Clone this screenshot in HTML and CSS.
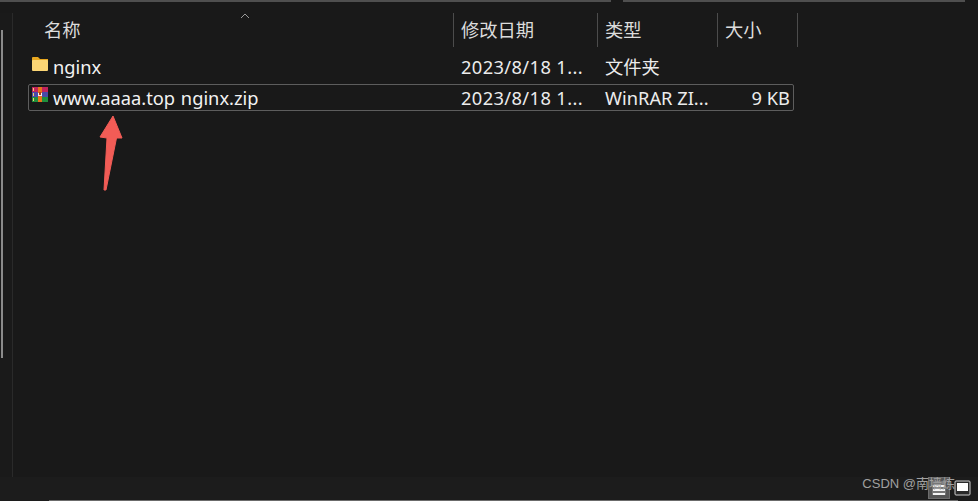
FILE: index.html
```html
<!DOCTYPE html>
<html lang="zh-CN">
<head>
<meta charset="utf-8">
<title>nginx</title>
<link rel="stylesheet" href="styles.css">
</head>
<body>
<div class="window">
  <div class="toolbar-edge">
    <div class="edge-line edge-left"></div>
    <div class="edge-line edge-right"></div>
  </div>
  <div class="main">
    <aside class="rail"><div class="rail-thumb"></div></aside>
    <section class="list">
      <div class="sort-caret">
        <svg width="10" height="6" viewBox="0 0 10 6"><path d="M1 5 5 1l4 4" fill="none" stroke="#9a9a9a" stroke-width="1"/></svg>
      </div>
      <div class="header">
        <div class="col col-name head-cell head-name">名称</div>
        <div class="col col-date head-cell">修改日期</div>
        <div class="col col-type head-cell">类型</div>
        <div class="col col-size head-cell">大小</div>
      </div>
      <div class="row row-first">
        <div class="col col-name name-cell">
          <svg class="file-icon" width="16" height="15" viewBox="0 0 16 15">
            <path d="M0 3V1q0-1 1-1h5l2 2h8v2H0z" fill="#e8a820"/>
            <rect x="0" y="3" width="16" height="11" rx="1" fill="#fcd675"/>
          </svg>
          <span>nginx</span>
        </div>
        <div class="col col-date date-cell">2023/8/18 1...</div>
        <div class="col col-type">文件夹</div>
        <div class="col col-size"></div>
      </div>
      <div class="row row-selected">
        <div class="col col-name name-cell">
          <svg class="file-icon" width="16" height="16" viewBox="0 0 16 16">
            <rect x="0" y="0" width="16" height="5" fill="#c2245c"/>
            <rect x="0" y="5" width="16" height="5" fill="#4a4aa8"/>
            <rect x="0" y="10" width="16" height="5" fill="#1f8f3c"/>
            <rect x="6" y="0" width="4" height="15" fill="#e8731c"/>
            <rect x="6" y="6" width="4" height="3" fill="#f5f0e6"/>
            <rect x="7" y="5" width="2" height="3" fill="#b03a20"/>
            <rect x="1" y="1" width="1" height="3" fill="#f4d06a"/>
            <rect x="1" y="6" width="1" height="3" fill="#f4d06a"/>
            <rect x="1" y="11" width="1" height="3" fill="#f4d06a"/>
          </svg>
          <span class="zip-name">www.aaaa.top nginx.zip</span>
        </div>
        <div class="col col-date date-cell">2023/8/18 1...</div>
        <div class="col col-type">WinRAR ZI...</div>
        <div class="col col-size size-value">9 KB</div>
      </div>
      <svg class="arrow" width="24" height="78" viewBox="0 0 24 78">
        <path d="M14 1 23 23 17.500 23 7 75 5 75 8 23 1 22Z" fill="#f25c56" stroke="#f25c56" stroke-linejoin="round"/>
      </svg>
    </section>
  </div>
  <footer class="status">
    <div class="view-btn view-active">
      <svg width="16" height="16" viewBox="0 0 16 16"><rect x="1" y="1" width="14" height="14" fill="#dadada" opacity=".25"/><path d="M2 6h12M2 10h12M2 14h12" stroke="#f4f4f4" stroke-width="2"/></svg>
    </div>
    <div class="view-btn view-plain">
      <svg width="17" height="16" viewBox="0 0 17 16"><rect x="1" y="1" width="15" height="14" rx="1" fill="#2a2a2a" stroke="#cfcfcf"/><rect x="3" y="3" width="11" height="8" fill="#fff"/></svg>
    </div>
    <span class="watermark">CSDN @南墙炼</span>
    <div class="scroll-line"></div>
  </footer>
</div>
</body>
</html>
```
FILE: styles.css
```css
* { box-sizing: border-box; }
html, body { margin: 0; padding: 0; background: #191919; }
body { font-family: "Noto Sans", "Noto Sans CJK SC", sans-serif; color: #ececec; overflow: hidden; }
.window { width: 978px; height: 501px; display: flex; flex-direction: column; position: relative; }
.toolbar-edge { height: 13px; display: flex; gap: 12px; flex: none; align-items: flex-start; }
.edge-line { height: 2px; background: #4f4f4f; }
.edge-left { width: 611px; }
.edge-right { width: 342px; }
.main { flex: 1; display: flex; min-height: 0; }
.rail { width: 13px; flex: none; border-right: 1px solid #2a2a2a; padding: 17px 0 0 1px; background: #1a1a1a; }
.rail-thumb { width: 2px; height: 328px; background: #8b8b8b; }
.list { flex: 1; position: relative; padding-left: 16px; }
.header { display: flex; height: 34px; width: 769px; }
.head-cell { border-right: 1px solid #4c4c4c; padding-left: 7px; line-height: 34px; color: #dcdcdc; }
.head-name { padding-left: 15px; }
.col { flex: none; font-size: 18.300px; white-space: nowrap; overflow: hidden; }
.col-name { width: 425px; }
.col-date { width: 144px; padding-left: 7px; }
.col-type { width: 120px; padding-left: 7px; }
.col-size { width: 80px; }
.date-cell { letter-spacing: 0.38px; }
.row { display: flex; width: 765px; height: 27px; line-height: 25px; border: 1px solid transparent; }
.row-first { margin-top: 6px; margin-bottom: 4px; }
.row-selected { border-color: #5d5d5d; border-radius: 2px; margin-left: -1px; width: 766px; }
.row .col-name { width: 424px; }
.row-selected .col-name { width: 425px; }
.row .col-size { width: 76px; }
.name-cell { display: flex; align-items: center; gap: 5px; padding-left: 2px; color: #f2f2f2; }
.row-selected .name-cell { padding-left: 3px; }
.file-icon { flex: none; margin-top: -5px; }
.zip-name { word-spacing: 1px; }
.size-value { text-align: right; padding-right: 4px; }
.sort-caret { position: absolute; left: 227px; top: 0; line-height: 0; }
.arrow { position: absolute; left: 86px; top: 102px; }
.status { height: 24px; flex: none; background: #1c1c1c; display: flex; justify-content: flex-end; align-items: flex-start; gap: 3px; padding-right: 7px; position: relative; }
.watermark { position: absolute; right: 23px; top: -1px; color: #a0a0a0; font-size: 13px; font-family: "Liberation Sans", "Noto Sans CJK SC", sans-serif; line-height: 16px; }
.view-btn { display: flex; align-items: center; justify-content: center; }
.view-active { width: 22px; height: 22px; background: #565656; border: 1px solid #6d6d6d; }
.view-plain { width: 18px; height: 22px; }
.scroll-line { position: absolute; left: 49px; right: 20px; bottom: 0; height: 1px; background: #6b6b6b; }
```
